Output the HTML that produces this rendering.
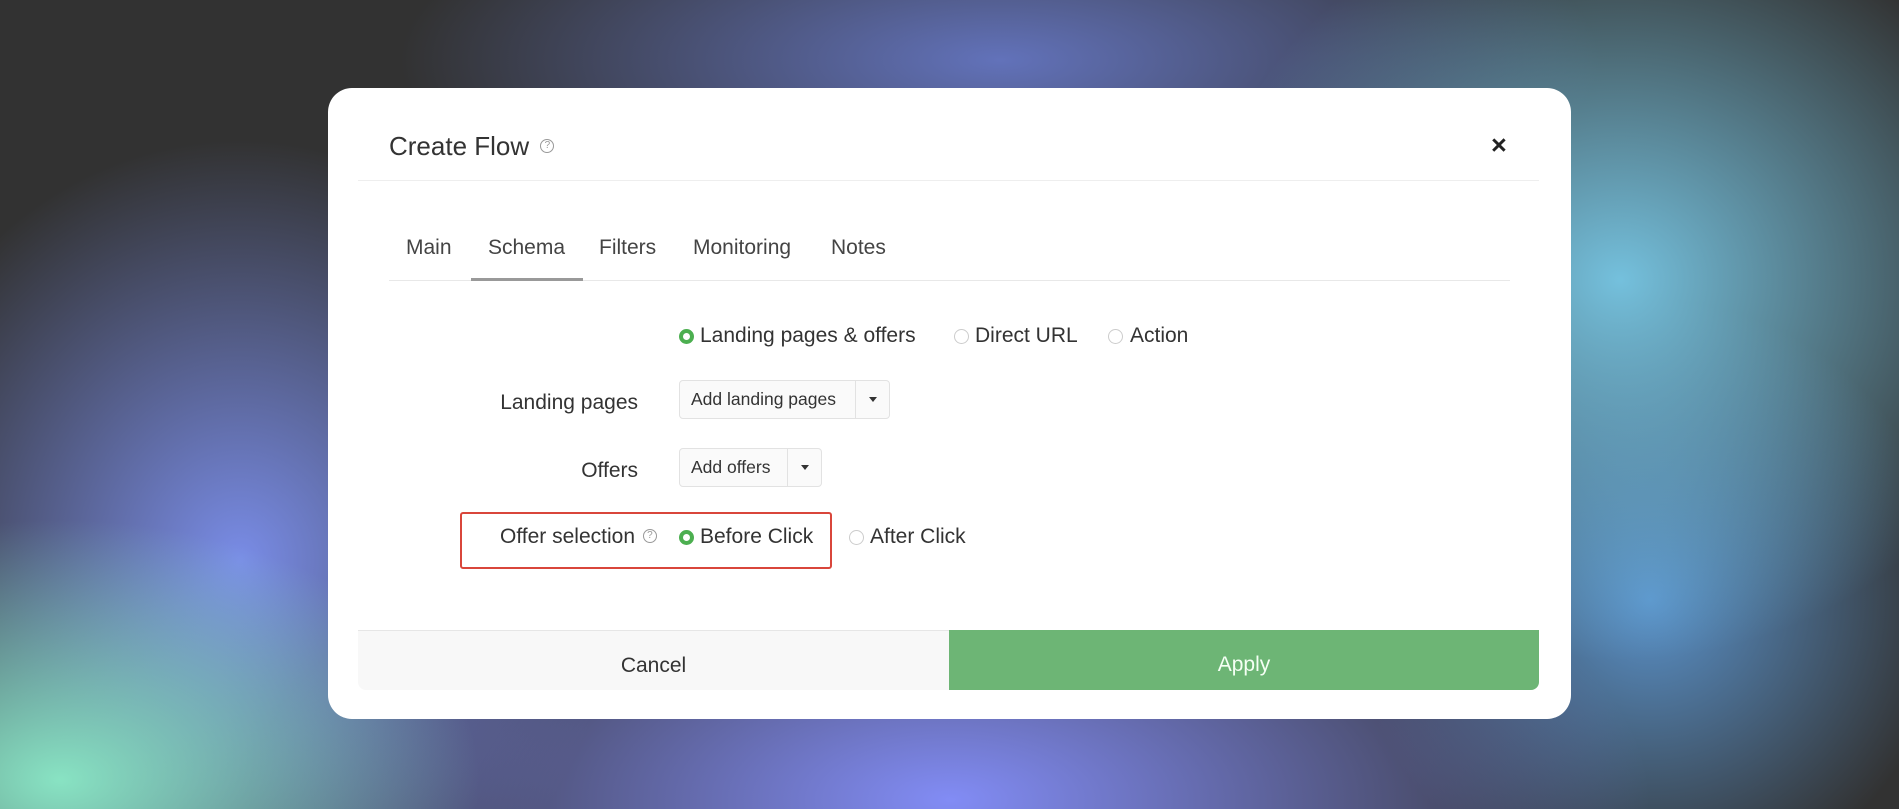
<!DOCTYPE html>
<html><head><meta charset="utf-8"><style>
*{margin:0;padding:0;box-sizing:border-box}
body{width:1899px;height:809px;overflow:hidden;position:relative;font-family:"Liberation Sans",sans-serif;color:#333;
background:
radial-gradient(ellipse 420px 260px at 60px 780px,rgba(140,235,200,.95),rgba(140,235,200,0) 100%),
radial-gradient(ellipse 700px 320px at 950px 800px,rgba(130,140,245,1),rgba(130,140,245,0) 100%),
radial-gradient(ellipse 380px 420px at 240px 560px,rgba(125,145,240,.95),rgba(125,145,240,0) 100%),
radial-gradient(ellipse 420px 380px at 1620px 280px,rgba(120,200,230,.95),rgba(120,200,230,0) 100%),
radial-gradient(ellipse 600px 200px at 1000px 60px,rgba(110,130,220,.8),rgba(110,130,220,0) 100%),
radial-gradient(ellipse 300px 300px at 1650px 600px,rgba(100,170,240,.8),rgba(100,170,240,0) 100%),
#323232;}
.modal{position:absolute;left:328px;top:88px;width:1243px;height:631px;background:#fff;border-radius:24px}
.a{position:absolute;white-space:nowrap}
.help{display:inline-block;width:14px;height:14px;border:1px solid #999;border-radius:50%;font-size:10px;line-height:12px;text-align:center;color:#999;vertical-align:middle}
.radio{position:absolute;width:15px;height:15px;border-radius:50%;border:1px solid #ccc;background:#fff}
.radio.on{border:4px solid #4caf50}
.btn{position:absolute;height:39px;border:1px solid #e2e2e2;border-radius:4px;background:#fafafa;font-size:17.5px;line-height:37px;padding-left:11px}
.btn .dd{position:absolute;right:0;top:0;width:34px;height:37px;border-left:1px solid #e2e2e2}
.btn .dd:after{content:"";position:absolute;left:13px;top:16px;border:4px solid transparent;border-top:5px solid #333}
.t{font-size:21px}
</style></head><body>
<div class="modal"></div>
<div class="a" style="left:389px;top:131px;font-size:26px;color:#333">Create Flow <span class="help" style="margin-left:4px;margin-top:-4px">?</span></div>
<div class="a" style="left:1491px;top:130px;font-size:27px;font-weight:bold;color:#222">×</div>
<div class="a" style="left:358px;top:180px;width:1181px;height:1px;background:#eee"></div>
<div class="a t" style="top:236px;color:#444;left:406px">Main</div>
<div class="a t" style="top:236px;color:#444;left:488px">Schema</div>
<div class="a t" style="top:236px;color:#444;left:599px">Filters</div>
<div class="a t" style="top:236px;color:#444;left:693px">Monitoring</div>
<div class="a t" style="top:236px;color:#444;left:831px">Notes</div>
<div class="a" style="left:389px;top:280px;width:1121px;height:1px;background:#e8e8e8"></div>
<div class="a" style="left:471px;top:278px;width:112px;height:3px;background:#999"></div>

<div class="radio on" style="left:679px;top:329px"></div>
<div class="a t" style="left:700px;top:324px">Landing pages &amp; offers</div>
<div class="radio" style="left:954px;top:329px"></div>
<div class="a t" style="left:975px;top:324px">Direct URL</div>
<div class="radio" style="left:1108px;top:329px"></div>
<div class="a t" style="left:1130px;top:324px">Action</div>

<div class="a t" style="right:1261px;top:391px">Landing pages</div>
<div class="btn" style="left:679px;top:380px;width:211px">Add landing pages<div class="dd"></div></div>
<div class="a t" style="right:1261px;top:459px">Offers</div>
<div class="btn" style="left:679px;top:448px;width:143px">Add offers<div class="dd"></div></div>

<div class="a" style="left:460px;top:512px;width:372px;height:57px;border:2px solid #d9463b;border-radius:3px"></div>
<div class="a t" style="left:500px;top:525px">Offer selection <span class="help" style="margin-left:2px;margin-top:-3px">?</span></div>
<div class="radio on" style="left:679px;top:530px"></div>
<div class="a t" style="left:700px;top:525px">Before Click</div>
<div class="radio" style="left:849px;top:530px"></div>
<div class="a t" style="left:870px;top:525px">After Click</div>

<div class="a" style="left:358px;top:630px;width:591px;height:60px;background:#f8f8f8;border-top:1px solid #e6e6e6;border-bottom-left-radius:8px;text-align:center;line-height:70px;font-size:21px;color:#333">Cancel</div>
<div class="a" style="left:949px;top:630px;width:590px;height:60px;background:#6db575;border-bottom-right-radius:8px;text-align:center;line-height:70px;font-size:21px;color:#f4fff4">Apply</div>
</body></html>
